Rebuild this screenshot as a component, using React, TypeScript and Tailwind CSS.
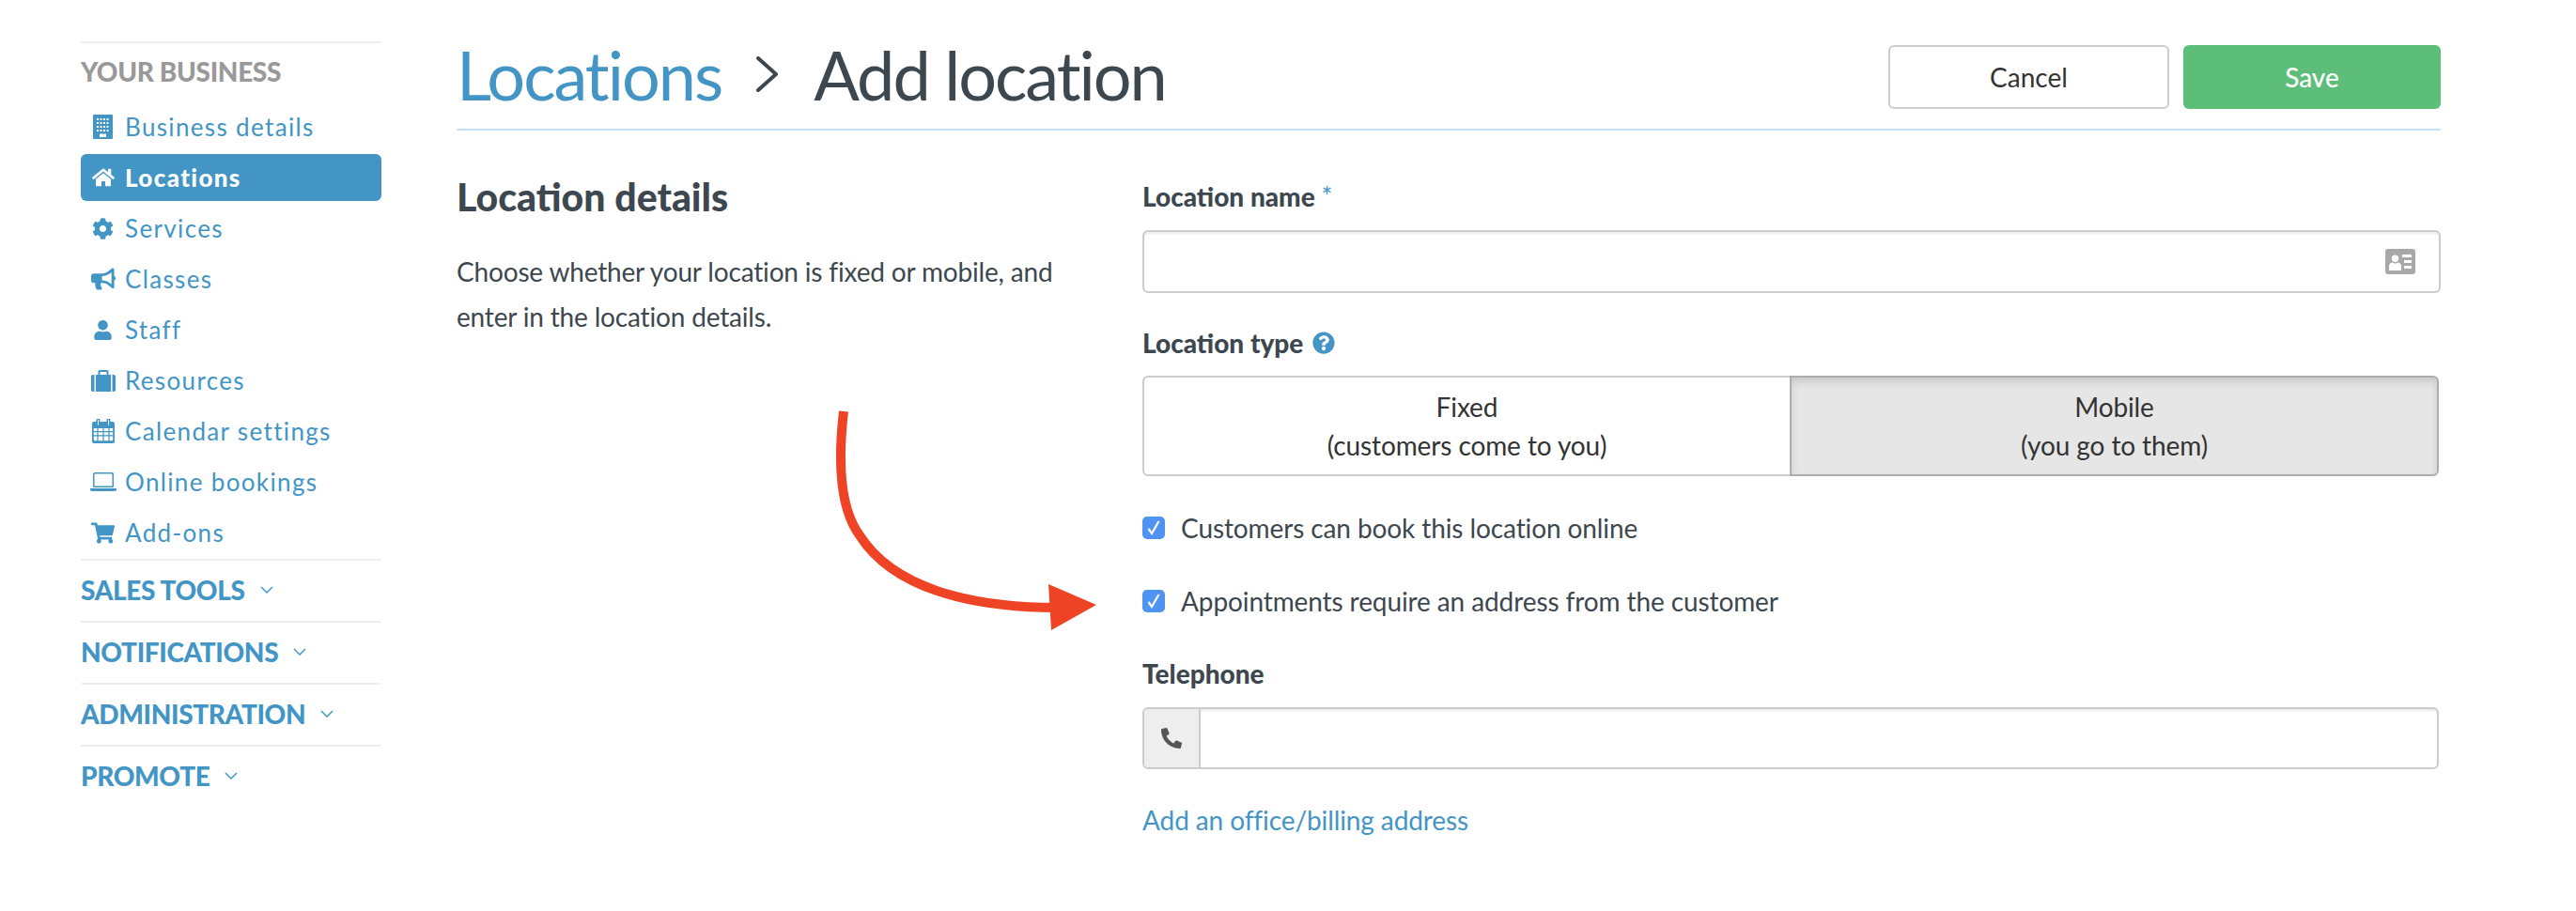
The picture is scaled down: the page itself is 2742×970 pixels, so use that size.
import React from 'react';
import { FaHome, FaCog, FaBullhorn, FaUser, FaShoppingCart, FaPhoneAlt, FaQuestionCircle } from 'react-icons/fa';

const Building = () => (
  <svg width="21" height="26" viewBox="0 0 21 26" fill="currentColor">
    <path fillRule="evenodd" d="M0 1a1 1 0 0 1 1-1h19a1 1 0 0 1 1 1v24a1 1 0 0 1-1 1H1a1 1 0 0 1-1-1V1zm4 3v2h2V4H4zm3.500 0v2h2V4h-2zm3.500 0v2h2V4h-2zm3.500 0v2h2V4h-2zM4 8v2h2V8H4zm3.500 0v2h2V8h-2zM11 8v2h2V8h-2zm3.500 0v2h2V8h-2zM4 12v2h2v-2H4zm3.500 0v2h2v-2h-2zm3.500 0v2h2v-2h-2zm3.500 0v2h2v-2h-2zM4 16v2h2v-2H4zm3.500 0v2h2v-2h-2zm3.500 0v2h2v-2h-2zm3.500 0v2h2v-2h-2zM7 20.500V24h7v-3.500H7z" />
  </svg>
);
const Suitcase = () => (
  <svg width="26" height="23" viewBox="0 0 26 23" fill="currentColor">
    <path fillRule="evenodd" d="M9 0h8a1.500 1.500 0 0 1 1.500 1.500V5H21v18H5V5h2.500V1.500A1.500 1.500 0 0 1 9 0zm.500 2v3h7V2h-7z" />
    <path d="M3.500 5v18H2a2 2 0 0 1-2-2V7a2 2 0 0 1 2-2h1.500zM22.500 5H24a2 2 0 0 1 2 2v14a2 2 0 0 1-2 2h-1.500V5z" />
  </svg>
);
const Calendar = () => (
  <svg width="24" height="26" viewBox="0 0 24 26" fill="currentColor">
    <path fillRule="evenodd" d="M2 3h2.500V1.500a2 2 0 0 1 4 0V3h7V1.500a2 2 0 0 1 4 0V3H22a2 2 0 0 1 2 2v19a2 2 0 0 1-2 2H2a2 2 0 0 1-2-2V5a2 2 0 0 1 2-2zm4-1.500V6a.500.500 0 0 0 1 0V1.500a.500.500 0 0 0-1 0zm11 0V6a.500.500 0 0 0 1 0V1.500a.500.500 0 0 0-1 0zM1.800 10v3h3.600v-3H1.800zm4.800 0v3h4.800v-3H6.600zm6 0v3h4.800v-3h-4.800zm6 0v3h3.600v-3h-3.600zM1.800 14.200v3h3.600v-3H1.800zm4.800 0v3h4.800v-3H6.600zm6 0v3h4.800v-3h-4.800zm6 0v3h3.600v-3h-3.600zM1.800 18.400v3.800a1 1 0 0 0 1 1h2.600v-4.800H1.800zm4.800 0v4.800h4.800v-4.800H6.600zm6 0v4.800h4.800v-4.800h-4.800zm6 0v4.800h2.600a1 1 0 0 0 1-1v-3.800h-3.600z" />
  </svg>
);
const Laptop = () => (
  <svg width="28" height="20" viewBox="0 0 28 20" fill="currentColor">
    <path fillRule="evenodd" d="M5 0h18a2 2 0 0 1 2 2v13a1 1 0 0 1-1 1H4a1 1 0 0 1-1-1V2a2 2 0 0 1 2-2zm.200 1.500a.7.7 0 0 0-.7.7v12.300h19V2.200a.7.7 0 0 0-.7-.7H5.200z" />
    <path d="M0 17h28v1a2 2 0 0 1-2 2H2a2 2 0 0 1-2-2v-1z" />
  </svg>
);
const IdCard = () => (
  <svg width="32" height="27" viewBox="0 0 32 27" fill="currentColor">
    <path fillRule="evenodd" d="M3 0h26a3 3 0 0 1 3 3v21a3 3 0 0 1-3 3H3a3 3 0 0 1-3-3V3a3 3 0 0 1 3-3zm7.500 6.500a3.700 3.700 0 1 0 0 7.400 3.700 3.700 0 0 0 0-7.400zM4 23h13v-4.500c0-2.500-1.800-4-3.500-4-1 .6-1.900 1-3 1s-2-.4-3-1c-1.700 0-3.500 1.500-3.500 4V23zM18 6v3h10V6H18zm2 6v3h8v-3h-8zm0 6v3h8v-3h-8z" />
  </svg>
);
const Chevron = () => (
  <svg width="14" height="9" viewBox="0 0 14 9" fill="none" stroke="currentColor" strokeWidth="1.500"><path d="M1 1l6 6 6-6" /></svg>
);
const Check = () => (
  <span className="flex w-[24px] h-[24px] shrink-0 items-center justify-center rounded-[5px] bg-[#4f94f3]">
    <svg width="16" height="18" viewBox="0 0 16 18" fill="none" stroke="#fff" strokeWidth="2.200"><path d="M2.500 10l3.500 5L13.500 2" /></svg>
  </span>
);

const items: [string, React.ReactNode][] = [
  ['Business details', <Building />],
  ['Locations', <FaHome size={24} />],
  ['Services', <FaCog size={23} />],
  ['Classes', <FaBullhorn size={26} />],
  ['Staff', <FaUser size={21} />],
  ['Resources', <Suitcase />],
  ['Calendar settings', <Calendar />],
  ['Online bookings', <Laptop />],
  ['Add-ons', <FaShoppingCart size={25} />],
];

const Section = ({ title }: { title: string }) => (
  <div className="border-t-2 border-[#eeeeee]">
    <div className="flex h-[36px] items-center gap-[16px] mt-[13px] text-[28px] leading-[36px] font-black tracking-[-0.35px] text-[#4295c5]">
      <span>{title}</span>
      <Chevron />
    </div>
  </div>
);

export default function App() {
  return (
    <div className="relative flex w-[2742px] h-[970px] bg-white text-[#3d474f] font-['Lato','Liberation_Sans',sans-serif] overflow-hidden">
      <aside className="ml-[86px] w-[320px] shrink-0 pt-[44px]">
        <div className="border-t-2 border-[#eeeeee] pt-[12px] text-[28px] leading-[36px] font-black tracking-[-0.35px] text-[#999999]">YOUR BUSINESS</div>
        <ul className="mt-[16px] flex flex-col gap-[4px]">
          {items.map(([label, icon]) => {
            const active = label === 'Locations';
            return (
              <li
                key={label}
                className={`flex h-[50px] items-center rounded-[6px] tracking-[1.35px] text-[26px] ${active ? 'bg-[#4295c5] text-white font-black' : 'text-[#4295c5]'}`}
              >
                <span className="flex w-[47px] justify-center">{icon}</span>
                <span>{label}</span>
              </li>
            );
          })}
        </ul>
        <div className="mt-[3px] flex flex-col gap-[28px]">
          {['SALES TOOLS', 'NOTIFICATIONS', 'ADMINISTRATION', 'PROMOTE'].map((t) => (
            <div key={t} className="h-[38px]"><Section title={t} /></div>
          ))}
        </div>
      </aside>

      <main className="ml-[80px] w-[2112px] shrink-0">
        <header className="flex h-[139px] items-start border-b-2 border-[#c4e3f7]">
          <div className="flex h-[110px] mt-[24px] w-[1524px] items-center text-[72px] leading-[84px] font-normal tracking-[-2px]">
            <span className="text-[#4295c5]">Locations</span>
            <svg className="ml-[36px] mr-[36px]" width="26" height="38" viewBox="0 0 26 38" fill="none" stroke="#3d474f" strokeWidth="4" strokeLinecap="round" strokeLinejoin="round"><path d="M3 2l19 17L3 36" /></svg>
            <span>Add location</span>
          </div>
          <button className="mt-[48px] h-[68px] w-[299px] rounded-[6px] border-2 border-[#cccccc] bg-white text-[28px] text-[#333333]">Cancel</button>
          <button className="ml-[15px] mt-[48px] h-[68px] w-[274px] rounded-[6px] bg-[#5cbe79] text-[28px] font-medium text-white">Save</button>
        </header>

        <div className="flex">
          <section className="w-[730px] shrink-0 pt-[48px]">
            <h2 className="text-[41px] leading-[46px] font-black">Location details</h2>
            <p className="mt-[32px] w-[660px] text-[28px] leading-[48px] tracking-[-0.17px]">Choose whether your location is fixed or mobile, and enter in the location details.</p>
          </section>

          <section className="w-[1382px] pt-[52px] tracking-[-0.1px]">
            <label className="block text-[28px] leading-[36px] font-black tracking-[0px]">Location name <span className="text-[#4295c5] font-normal">*</span></label>
            <div className="mt-[18px] flex h-[67px] items-center justify-end rounded-[6px] border-2 border-[#cccccc] pr-[25px] shadow-[inset_0_2px_2px_rgba(0,0,0,0.08)] text-[#a8a8a8]">
              <IdCard />
            </div>

            <label className="mt-[35px] flex h-[36px] items-center gap-[10px] text-[28px] font-black tracking-[0px]">
              Location type <FaQuestionCircle size={24} className="text-[#4295c5]" />
            </label>
            <div className="mt-[17px] mr-[2px] flex h-[107px] text-center text-[28px] leading-[41px] text-[#333333]">
              <div className="flex w-[689px] flex-col justify-center rounded-l-[6px] border-2 border-r-0 border-[#cccccc]">
                <span>Fixed</span>
                <span>(customers come to you)</span>
              </div>
              <div className="flex flex-1 flex-col justify-center rounded-r-[6px] border-2 border-[#adadad] bg-[#e6e6e6] shadow-[inset_0_5px_8px_rgba(0,0,0,0.125)]">
                <span>Mobile</span>
                <span>(you go to them)</span>
              </div>
            </div>

            <div className="mt-[43px] flex h-[24px] items-center gap-[17px] text-[28px]"><Check /><span>Customers can book this location online</span></div>
            <div className="mt-[54px] flex h-[24px] items-center gap-[17px] text-[28px]"><Check /><span>Appointments require an address from the customer</span></div>

            <label className="mt-[47px] block text-[28px] leading-[36px] font-black tracking-[0px]">Telephone</label>
            <div className="mt-[18px] mr-[2px] flex h-[66px] overflow-hidden rounded-[6px] border-2 border-[#cccccc] shadow-[inset_0_2px_2px_rgba(0,0,0,0.08)]">
              <span className="flex w-[60px] items-center justify-center border-r-2 border-[#cccccc] bg-[#eeeeee] text-[#555555]"><FaPhoneAlt size={22} /></span>
            </div>
            <a className="mt-[36px] block text-[28px] leading-[36px] text-[#4295c5]">Add an office/billing address</a>
          </section>
        </div>
      </main>

      <svg className="absolute left-0 top-0 pointer-events-none" width="2742" height="970" fill="none">
        <path d="M898 438C892 490 893 540 915 570C950 625 1030 647 1125 647" stroke="#ee4325" strokeWidth="10" />
        <path d="M1116 622L1167 644L1119 671Z" fill="#ee4325" />
      </svg>
    </div>
  );
}
